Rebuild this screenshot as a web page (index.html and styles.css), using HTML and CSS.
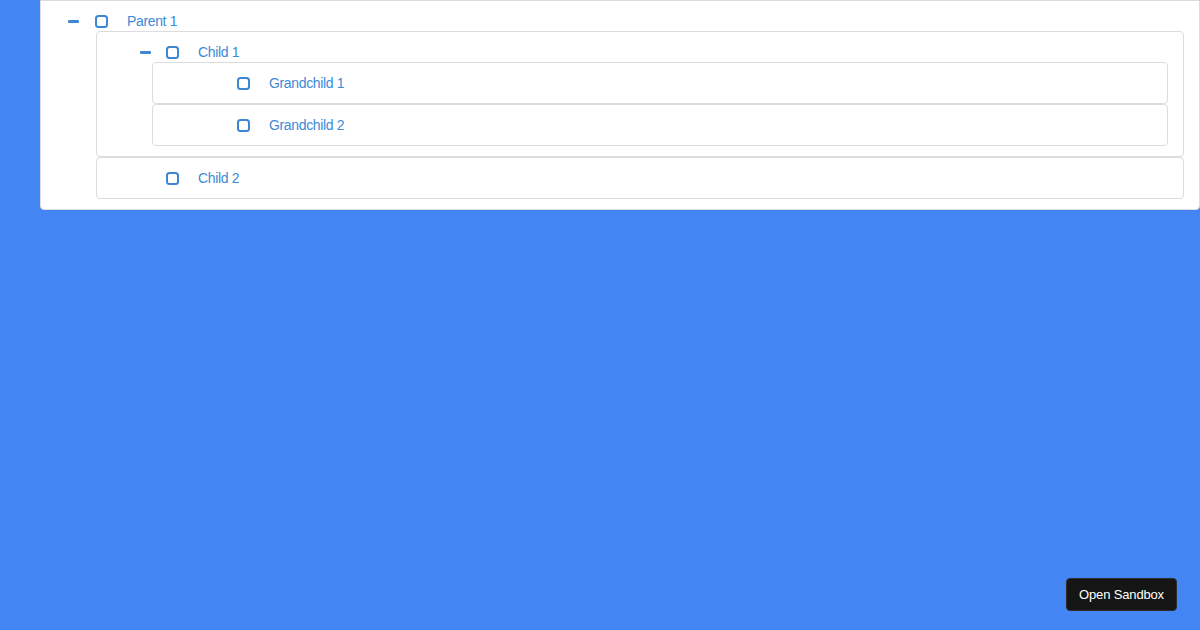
FILE: index.html
```html
<!DOCTYPE html>
<html>
<head>
<meta charset="utf-8">
<link rel="stylesheet" href="styles.css">
</head>
<body>
<div class="page">
  <div class="node card">
    <div class="row lvl0">
      <span class="toggle"></span>
      <span class="check"></span>
      <span class="label">Parent 1</span>
    </div>
    <div class="children">
      <div class="node">
        <div class="row lvl1">
          <span class="toggle"></span>
          <span class="check"></span>
          <span class="label">Child 1</span>
        </div>
        <div class="children">
          <div class="node">
            <div class="row lvl2">
              <span class="check"></span>
              <span class="label">Grandchild 1</span>
            </div>
          </div>
          <div class="node">
            <div class="row lvl2">
              <span class="check"></span>
              <span class="label">Grandchild 2</span>
            </div>
          </div>
        </div>
      </div>
      <div class="node">
        <div class="row lvl1 leaf">
          <span class="check"></span>
          <span class="label">Child 2</span>
        </div>
      </div>
    </div>
  </div>
</div>
<button class="sandbox">Open Sandbox</button>
</body>
</html>
```
FILE: styles.css
```css
html, body {
  margin: 0;
  padding: 0;
  height: 100%;
}
body {
  background: #4285f3;
  font-family: "Liberation Sans", Arial, sans-serif;
  font-size: 14px;
  overflow: hidden;
}
.page {
  padding-left: 40px;
}
.node {
  background: #fff;
  border: 1px solid #dcdcdc;
  border-radius: 4px;
  padding: 10px 15px 10px 0;
}
.card {
  border-top-right-radius: 0;
  border-top-left-radius: 0;
  border-right: 1px solid #dcdcdc;
}
.children {
  margin-left: 55px;
}
.row {
  display: flex;
  align-items: center;
  height: 20px;
}
.lvl0 { padding-left: 27px; }
.lvl1 { padding-left: 43px; }
.lvl2 { padding-left: 84px; }
.lvl1.leaf { padding-left: 69px; }
.toggle {
  width: 11px;
  height: 3px;
  background: #3d86d3;
  border-radius: 1px;
  margin-right: 16px;
}
.lvl1 .toggle {
  margin-right: 15px;
}
.check {
  box-sizing: border-box;
  width: 13px;
  height: 13px;
  border: 2.5px solid #3d86d3;
  border-radius: 3.5px;
  margin-right: 19px;
}
.label {
  color: #3d8ad6;
  line-height: 20px;
  letter-spacing: -0.35px;
}
.sandbox {
  position: fixed;
  right: 23px;
  bottom: 19px;
  width: 111px;
  height: 33px;
  background: #151515;
  color: #fff;
  border: 1px solid #2e2e2e;
  border-radius: 4px;
  font-family: "Liberation Sans", Arial, sans-serif;
  font-size: 13px;
  letter-spacing: -0.15px;
  padding: 0;
}
```
